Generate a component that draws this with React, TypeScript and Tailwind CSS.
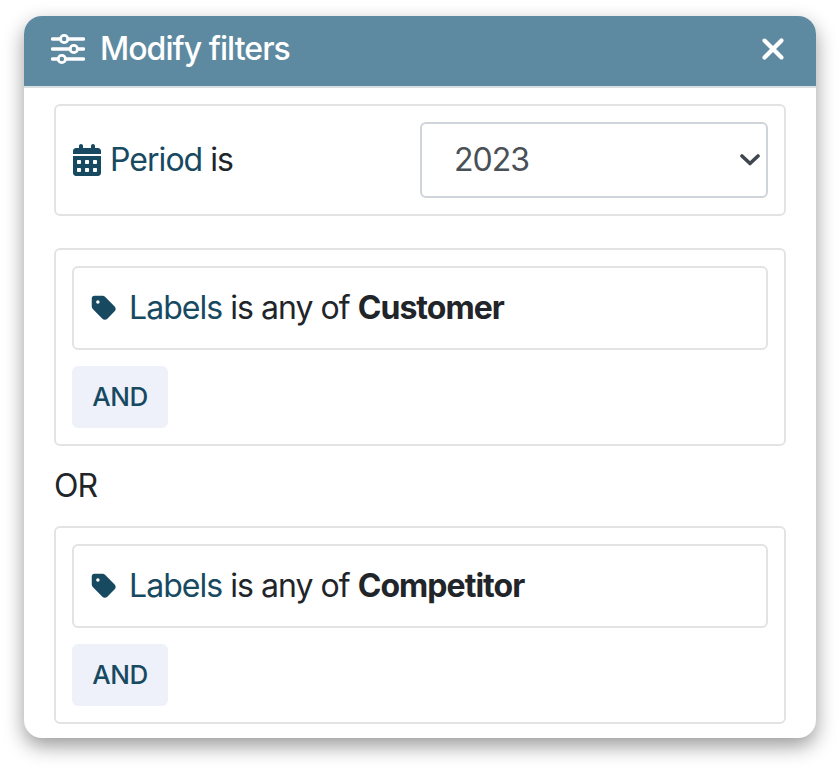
import type { ReactNode } from 'react';
import { FaXmark, FaTag, FaCalendarDays } from 'react-icons/fa6';

const groups = [
  { id: 1, label: 'Customer' },
  { id: 2, label: 'Competitor' },
];

function SlidersIcon() {
  return (
    <svg width="34" height="32" viewBox="0 0 34 32" fill="none" stroke="currentColor">
      <path
        d="M1.5 6H9.5M17 6H32.5M1.5 16H19M26.5 16H32.5M1.5 26H7M14.5 26H32.5"
        strokeWidth="3.4"
        strokeLinecap="round"
      />
      <circle cx="13.2" cy="6" r="3.7" strokeWidth="2.8" />
      <circle cx="22.8" cy="16" r="3.7" strokeWidth="2.8" />
      <circle cx="10.8" cy="26" r="3.7" strokeWidth="2.8" />
    </svg>
  );
}

function Panel({ children }: { children: ReactNode }) {
  return <div className="rounded-md border-2 border-[#e3e3e3] p-4">{children}</div>;
}

function LabelGroup({ label }: { label: string }) {
  return (
    <Panel>
      <div className="flex h-[84px] items-center rounded-md border-2 border-[#e3e3e3] px-4">
        <FaTag className="mr-[11px] h-7 w-7 shrink-0 text-[#174a61]" />
        <p>
          <span className="text-[#174a61]">Labels</span> is any of <b className="font-bold">{label}</b>
        </p>
      </div>
      <button className="mt-4 flex h-[62px] w-24 items-center justify-center rounded-md bg-[#eef1fa] text-[26px] font-medium tracking-[-0.02em] text-[#174a61]">
        AND
      </button>
    </Panel>
  );
}

export default function App() {
  return (
    <div className="h-[770px] w-[840px] overflow-hidden bg-white px-6 pt-4 font-['Inter','Liberation_Sans',sans-serif] text-[32px] leading-[48px] tracking-[-0.03em] text-[#212529]">
      <div className="h-[722px] overflow-hidden rounded-[18px] bg-white shadow-[0_8px_20px_rgba(0,0,0,0.4)]">
        <header className="flex h-[72px] items-center justify-between border-b-2 border-[#dadfe1] bg-[#5d8aa1] pr-7 pb-1 pl-[27px] text-white">
          <div className="flex items-center gap-[15px]">
            <SlidersIcon />
            <h1 className="font-medium">Modify filters</h1>
          </div>
          <button aria-label="Close">
            <FaXmark className="h-[34px] w-[30px]" />
          </button>
        </header>

        <div className="px-[30px] pt-4">
          <Panel>
            <div className="flex h-[76px] items-center justify-between">
              <div className="flex items-center gap-2">
                <FaCalendarDays className="h-8 w-[30px] text-[#174a61]" />
                <p>
                  <span className="text-[#174a61]">Period</span> is
                </p>
              </div>
              <div className="flex h-full w-[348px] items-center justify-between rounded-md border-2 border-[#ced4da] pr-[6px] pl-8 text-[#495057]">
                <span>2023</span>
                <svg width="20" height="14" viewBox="0 0 20 14" fill="none" stroke="#40474e" strokeWidth="3.6">
                  <path d="M2 3L10 10.5L18 3" strokeLinecap="round" strokeLinejoin="round" />
                </svg>
              </div>
            </div>
          </Panel>

          <div className="mt-8">
            {groups.map((group, i) => (
              <div key={group.id}>
                {i > 0 && <p className="py-4">OR</p>}
                <LabelGroup label={group.label} />
              </div>
            ))}
          </div>
        </div>
      </div>
    </div>
  );
}
